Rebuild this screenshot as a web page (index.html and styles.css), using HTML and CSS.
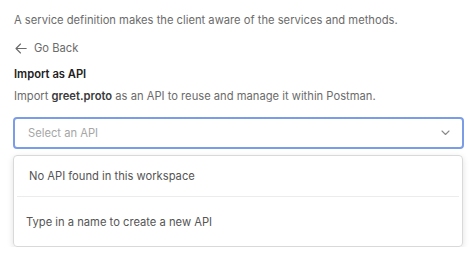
FILE: index.html
```html
<!DOCTYPE html>
<html>
<head>
<meta charset="utf-8">
<link rel="stylesheet" href="styles.css">
</head>
<body>
<div class="panel">
  <p class="desc">A service definition makes the client aware of the services and methods.</p>
  <div class="back">
    <svg width="12" height="11" viewBox="0 0 12 11" fill="none" stroke="#6b6b6b" stroke-width="1.1" stroke-linecap="round" stroke-linejoin="round"><path d="M11.2 5.5H1M5.5 1L1 5.5 5.5 10"/></svg>
    <span>Go Back</span>
  </div>
  <div class="title">Import as API</div>
  <p class="sub">Import <b>greet.proto</b> as an API to reuse and manage it within Postman.</p>
  <div class="select">
    <span class="placeholder">Select an API</span>
    <svg width="9" height="6" viewBox="0 0 9 6" fill="none" stroke="#8a8a8a" stroke-width="1.1" stroke-linecap="round" stroke-linejoin="round"><path d="M1 1l3.5 3.5L8 1"/></svg>
  </div>
  <div class="menu">
    <div class="item first">No API found in this workspace</div>
    <div class="item second">Type in a name to create a new API</div>
  </div>
</div>
</body>
</html>
```
FILE: styles.css
```css
html, body {
  margin: 0;
  padding: 0;
  background: #ffffff;
}
* {
  box-sizing: border-box;
}
body {
  font-family: Inter, "Noto Sans", sans-serif;
  font-size: 11.2px;
  color: #6b6b6b;
}
.panel {
  padding: 11px 10px 0 13px;
  display: flex;
  flex-direction: column;
}
.desc {
  margin: 0;
  line-height: 18px;
  padding-left: 1px;
}
.back {
  margin-top: 10px;
  display: flex;
  align-items: center;
  gap: 7px;
  height: 18px;
  padding-left: 2px;
}
.title {
  margin-top: 8px;
  font-weight: 600;
  color: #212121;
  line-height: 18px;
  padding-left: 1px;
}
.sub {
  margin: 4px 0 0 0;
  line-height: 18px;
  padding-left: 1px;
}
.sub b {
  font-weight: 600;
  color: #3a3a3a;
}
.select {
  margin-top: 12px;
  height: 32px;
  border: 2px solid #7b9de8;
  border-radius: 4px;
  display: flex;
  align-items: center;
  justify-content: space-between;
  padding: 0 12px 0 13px;
}
.placeholder {
  color: #a6a6a6;
}
.menu {
  margin-top: 6px;
  margin-left: 0;
  margin-right: 1px;
  height: 92px;
  border: 1px solid #d9d9d9;
  border-radius: 4px;
  box-shadow: 0 2px 6px rgba(0,0,0,0.12);
  padding: 0 3px;
  display: flex;
  flex-direction: column;
}
.item {
  display: flex;
  align-items: center;
  color: #555555;
}
.item.first {
  height: 41px;
  padding-left: 12px;
  border-bottom: 1px solid #ececec;
}
.item.second {
  flex: 1;
  padding-left: 9px;
}
```
